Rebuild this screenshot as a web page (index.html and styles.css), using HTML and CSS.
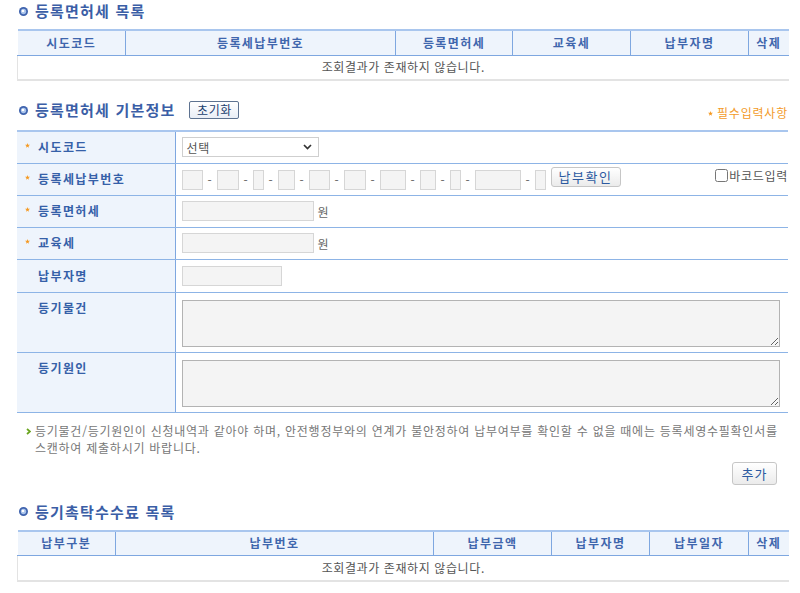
FILE: index.html
```html
<!DOCTYPE html>
<html lang="ko">
<head>
<meta charset="utf-8">
<title>등록면허세</title>
<link rel="stylesheet" href="styles.css">
</head>
<body>
<div class="page">

  <div class="title-row t1">
    <h2 class="title"><svg class="dot" viewBox="0 0 9 9"><circle cx="4.5" cy="4.5" r="4.5" fill="#3f63ae"/><circle cx="4.5" cy="4.5" r="2.7" fill="#a9c3ea"/><circle cx="4" cy="4" r="1.3" fill="#ffffff"/></svg>등록면허세 목록</h2>
  </div>
  <table class="list">
    <colgroup><col class="a1"><col class="a2"><col class="a3"><col class="a4"><col class="a5"><col class="a6"></colgroup>
    <thead>
      <tr><th>시도코드</th><th>등록세납부번호</th><th>등록면허세</th><th>교육세</th><th>납부자명</th><th>삭제</th></tr>
    </thead>
    <tbody>
      <tr><td colspan="6">조회결과가 존재하지 않습니다.</td></tr>
    </tbody>
  </table>

  <div class="title-row t2">
    <h2 class="title"><svg class="dot" viewBox="0 0 9 9"><circle cx="4.5" cy="4.5" r="4.5" fill="#3f63ae"/><circle cx="4.5" cy="4.5" r="2.7" fill="#a9c3ea"/><circle cx="4" cy="4" r="1.3" fill="#ffffff"/></svg>등록면허세 기본정보</h2>
    <button class="btn-reset" type="button">초기화</button>
    <span class="required"><svg class="star" viewBox="0 0 10 10"><polygon points="5,0 6.2,3.6 10,3.6 7,5.9 8.1,9.5 5,7.3 1.9,9.5 3,5.9 0,3.6 3.8,3.6" fill="#f59a23"/></svg>필수입력사항</span>
  </div>

  <table class="form">
    <colgroup><col class="lc"><col class="vc"></colgroup>
    <tbody>
      <tr>
        <th><span class="lbl"><span class="req"><svg class="star" viewBox="0 0 10 10"><polygon points="5,0 6.2,3.6 10,3.6 7,5.9 8.1,9.5 5,7.3 1.9,9.5 3,5.9 0,3.6 3.8,3.6" fill="#f59a23"/></svg></span>시도코드</span></th>
        <td><div class="select"><span>선택</span><svg class="chev" viewBox="0 0 9 6"><polyline points="1,1 4.5,4.5 8,1" fill="none" stroke="#333" stroke-width="1.7"/></svg></div></td>
      </tr>
      <tr>
        <th><span class="lbl"><span class="req"><svg class="star" viewBox="0 0 10 10"><polygon points="5,0 6.2,3.6 10,3.6 7,5.9 8.1,9.5 5,7.3 1.9,9.5 3,5.9 0,3.6 3.8,3.6" fill="#f59a23"/></svg></span>등록세납부번호</span></th>
        <td>
          <div class="numrow">
            <div class="nums">
              <input class="box w21" type="text"><span class="dash">-</span>
              <input class="box w22" type="text"><span class="dash">-</span>
              <input class="box w11" type="text"><span class="dash">-</span>
              <input class="box w17" type="text"><span class="dash">-</span>
              <input class="box w21" type="text"><span class="dash">-</span>
              <input class="box w22" type="text"><span class="dash">-</span>
              <input class="box w26" type="text"><span class="dash">-</span>
              <input class="box w16" type="text"><span class="dash">-</span>
              <input class="box w11" type="text"><span class="dash">-</span>
              <input class="box w46" type="text"><span class="dash">-</span>
              <input class="box w11" type="text">
              <button class="btn btn-check" type="button">납부확인</button>
            </div>
            <label class="barcode"><input type="checkbox">바코드입력</label>
          </div>
        </td>
      </tr>
      <tr>
        <th><span class="lbl"><span class="req"><svg class="star" viewBox="0 0 10 10"><polygon points="5,0 6.2,3.6 10,3.6 7,5.9 8.1,9.5 5,7.3 1.9,9.5 3,5.9 0,3.6 3.8,3.6" fill="#f59a23"/></svg></span>등록면허세</span></th>
        <td><div class="amount"><input class="box w132" type="text"><span class="won">원</span></div></td>
      </tr>
      <tr>
        <th><span class="lbl"><span class="req"><svg class="star" viewBox="0 0 10 10"><polygon points="5,0 6.2,3.6 10,3.6 7,5.9 8.1,9.5 5,7.3 1.9,9.5 3,5.9 0,3.6 3.8,3.6" fill="#f59a23"/></svg></span>교육세</span></th>
        <td><div class="amount"><input class="box w132" type="text"><span class="won">원</span></div></td>
      </tr>
      <tr class="r5">
        <th><span class="lbl"><span class="req"></span>납부자명</span></th>
        <td><div class="amount"><input class="box w100" type="text"></div></td>
      </tr>
      <tr class="tall">
        <th><span class="lbl"><span class="req"></span>등기물건</span></th>
        <td><textarea class="area"></textarea></td>
      </tr>
      <tr class="tall">
        <th><span class="lbl"><span class="req"></span>등기원인</span></th>
        <td><textarea class="area"></textarea></td>
      </tr>
    </tbody>
  </table>

  <div class="note">
    <span class="note-mark"><svg class="arrow" viewBox="0 0 5 7"><path d="M1 1 L4 3.5 L1 6" fill="none" stroke="#6aa51f" stroke-width="1.8"/></svg></span>
    <p class="note-text">등기물건/등기원인이 신청내역과 같아야 하며, 안전행정부와의 연계가 불안정하여 납부여부를 확인할 수 없을 때에는 등록세영수필확인서를 스캔하여 제출하시기 바랍니다.</p>
  </div>

  <div class="actions">
    <button class="btn btn-add" type="button">추가</button>
  </div>

  <div class="title-row t3">
    <h2 class="title"><svg class="dot" viewBox="0 0 9 9"><circle cx="4.5" cy="4.5" r="4.5" fill="#3f63ae"/><circle cx="4.5" cy="4.5" r="2.7" fill="#a9c3ea"/><circle cx="4" cy="4" r="1.3" fill="#ffffff"/></svg>등기촉탁수수료 목록</h2>
  </div>
  <table class="list">
    <colgroup><col class="b1"><col class="b2"><col class="b3"><col class="b4"><col class="b5"><col class="b6"></colgroup>
    <thead>
      <tr><th>납부구분</th><th>납부번호</th><th>납부금액</th><th>납부자명</th><th>납부일자</th><th>삭제</th></tr>
    </thead>
    <tbody>
      <tr><td colspan="6">조회결과가 존재하지 않습니다.</td></tr>
    </tbody>
  </table>

</div>
</body>
</html>
```
FILE: styles.css
```css
* { box-sizing: border-box; }
html, body { margin: 0; padding: 0; background: #ffffff; }
body {
  font-family: "Noto Sans CJK KR", "Noto Sans", "Liberation Sans", sans-serif;
  font-size: 12px;
  color: #555555;
}
.page { width: 788px; padding-left: 17px; }

/* titles */
.title-row { display: flex; align-items: center; height: 22px; }
.title {
  margin: 0;
  display: flex;
  align-items: center;
  font-size: 15px;
  line-height: 22px;
  font-weight: bold;
  letter-spacing: 1.2px;
  color: #3b5ea6;
}
.dot { width: 9px; height: 9px; margin-left: 2px; margin-right: 7px; }
.t1 { margin-bottom: 7px; }
.t2 { margin-top: 18px; margin-bottom: 9px; }
.t3 { margin-top: 16px; margin-bottom: 7px; }

.btn-reset {
  margin-left: 14px;
  width: 50px;
  height: 18px;
  padding: 0;
  border: 1px solid #5d7290;
  border-radius: 2px;
  background: linear-gradient(#ffffff, #e9eef6);
  font-family: inherit;
  font-size: 12px;
  line-height: 16px;
  letter-spacing: 0.5px;
  color: #22406f;
}
.required {
  margin-left: auto;
  margin-top: 6px;
  display: flex;
  align-items: center;
  color: #f39b2a;
  font-size: 12px;
  line-height: 14px;
  letter-spacing: 0.8px;
}
.required .star { width: 5px; height: 5px; margin-right: 4px; }

/* list tables */
.list { width: 771px; border-collapse: collapse; table-layout: fixed; }
.a1 { width: 108px; } .a2 { width: 270px; } .a3 { width: 117px; }
.a4 { width: 118px; } .a5 { width: 118px; } .a6 { width: 40px; }
.b1 { width: 98px; } .b2 { width: 318px; } .b3 { width: 118px; }
.b4 { width: 98px; } .b5 { width: 99px; } .b6 { width: 40px; }
.list th {
  height: 25px;
  padding: 0;
  background: #eef4fc;
  border-top: 2px solid #a9c6ee;
  border-bottom: 1px solid #7ea7e0;
  border-left: 1px solid #7ea7e0;
  color: #3f66ad;
  font-weight: bold;
  font-size: 12px;
  line-height: 16px;
  letter-spacing: 1.4px;
}
.list th:first-child { border-left: none; }
.list td {
  height: 25px;
  padding: 0;
  text-align: center;
  border-bottom: 2px solid #e3e3e3;
  border-left: 1px solid #e3e3e3;
  color: #555555;
  line-height: 16px;
  letter-spacing: 0.6px;
}

/* form table */
.form {
  width: 771px;
  border-collapse: collapse;
  table-layout: fixed;
  border-top: 2px solid #a9c6ee;
}
.lc { width: 158px; }
.form tr { height: 32px; }
.form tr.r5 { height: 33px; }
.form tr.tall { height: 60px; }
.form th {
  padding: 0 0 0 8px;
  text-align: left;
  background: #eef4fc;
  border-bottom: 1px solid #8db4e6;
  border-right: 1px solid #7ea7e0;
  font-weight: bold;
  color: #3560a8;
  font-size: 12px;
  line-height: 16px;
}
.form td {
  padding: 0 9px 0 6px;
  border-bottom: 1px solid #8db4e6;
}
.form tr.tall th { vertical-align: top; padding-top: 7px; }
.form tr.tall td { vertical-align: top; padding-top: 7px; }

.lbl { display: flex; align-items: center; letter-spacing: 1.4px; }
.req { width: 13px; display: flex; align-items: center; }
.req .star { width: 5px; height: 5px; margin-bottom: 4px; }

.select {
  width: 137px;
  height: 20px;
  border: 1px solid #cfcfcf;
  background: #ffffff;
  display: flex;
  align-items: center;
  justify-content: space-between;
  padding: 0 6px 0 4px;
  color: #555555;
  font-size: 12px;
  letter-spacing: 0.6px;
}
.chev { width: 9px; height: 6px; }

.box {
  height: 20px;
  padding: 0;
  margin: 0;
  border: 1px solid #d6d6d6;
  background: #f4f4f4;
  font-family: inherit;
  font-size: 12px;
}
.w11 { width: 11px; } .w16 { width: 16px; } .w17 { width: 17px; }
.w21 { width: 21px; } .w22 { width: 22px; } .w26 { width: 26px; }
.w46 { width: 46px; } .w100 { width: 100px; } .w132 { width: 132px; }

.numrow { display: flex; justify-content: space-between; align-items: flex-start; padding-top: 1px; margin-right: -9px; }
.nums { display: flex; align-items: center; }
.dash { width: 14px; text-align: center; color: #666666; font-size: 12px; line-height: 14px; }

.btn {
  padding: 0;
  border: 1px solid #c6c6c6;
  border-radius: 3px;
  background: linear-gradient(#ffffff, #ebebeb);
  font-family: inherit;
  font-size: 13px;
  color: #2c5aa0;
}
.btn-check { width: 70px; height: 20px; margin-left: 5px; margin-bottom: 6px; letter-spacing: 1.5px; line-height: 18px; }
.barcode {
  display: flex;
  align-items: center;
  padding-top: 2px;
  color: #555555;
  font-size: 12px;
  line-height: 14px;
  letter-spacing: 0.7px;
}
.barcode input { margin: 0 1px 0 0; width: 13px; height: 13px; }

.amount { display: flex; align-items: center; }
.won { margin-left: 4px; color: #666666; font-size: 12px; }

.area {
  display: block;
  width: 598px;
  height: 47px;
  margin: 0;
  border: 1px solid #b3b3b3;
  background: #f4f4f4;
  font-family: inherit;
}

/* note */
.note { display: flex; margin-top: 9px; padding-left: 9px; }
.note-mark { width: 9px; display: flex; padding-top: 6px; }
.arrow { width: 5px; height: 7px; }
.note-text {
  margin: 0;
  width: 753px;
  color: #777777;
  font-size: 12px;
  line-height: 17px;
  letter-spacing: 0.75px;
  word-break: keep-all;
}

.actions { display: flex; justify-content: flex-end; margin-top: 6px; padding-right: 11px; }
.btn-add { width: 45px; height: 23px; font-size: 13px; line-height: 21px; letter-spacing: 1px; }
```
